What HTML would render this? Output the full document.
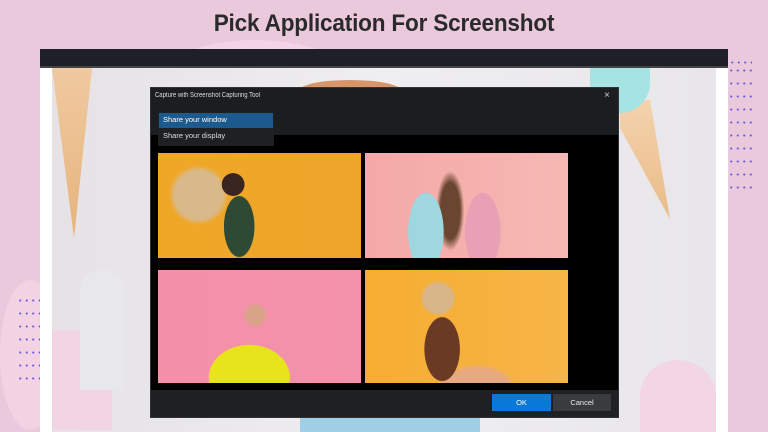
<!DOCTYPE html>
<html><head><style>
*{margin:0;padding:0;box-sizing:border-box}
html,body{width:768px;height:432px;overflow:hidden}
body{background:#ebc9dc;font-family:"Liberation Sans",sans-serif;position:relative}
.abs{position:absolute}
.title{left:0;width:768px;top:10px;text-align:center;font-size:24px;font-weight:bold;color:#2a2a2a;letter-spacing:-0.2px;transform:scaleX(0.94)}
.dots{background-image:radial-gradient(circle,#6b5be0 0.9px,transparent 1.2px);background-size:6.5px 13px}
</style></head><body>
<div class="abs" style="left:130px;top:40px;width:250px;height:140px;border-radius:50%;background:#f4d3e6"></div>
<div class="abs" style="left:0;top:280px;width:60px;height:150px;border-radius:50%;background:#f2d2e3"></div>
<div class="abs title">Pick Application For Screenshot</div>
<div class="abs dots" style="left:664px;top:56px;width:88px;height:8px"></div>
<div class="abs dots" style="left:728px;top:64px;width:24px;height:128px"></div>
<div class="abs dots" style="left:17px;top:294px;width:24px;height:96px"></div>
<div class="abs" style="left:40px;top:49px;width:688px;height:19px;background:#1d2127;border-bottom:2px solid #444"></div>
<div class="abs" style="left:40px;top:68px;width:688px;height:364px;background:#fff"></div>
<div class="abs" style="left:52px;top:68px;width:664px;height:364px;background:linear-gradient(90deg,#e6e2e6,#efeef0 50%,#e8e6ea)"></div>
<div class="abs" style="left:52px;top:68px;width:40px;height:170px;background:linear-gradient(180deg,#f0c9a0,#e6b47c);clip-path:polygon(0 0,100% 0,55% 100%)"></div>
<div class="abs" style="left:620px;top:100px;width:50px;height:140px;background:linear-gradient(180deg,#f3d2ad,#e9b881);clip-path:polygon(0 0,60% 0,100% 85%,0 20%)"></div>
<div class="abs" style="left:590px;top:68px;width:60px;height:45px;border-radius:0 0 30px 30px;background:#a6e4e3"></div>
<div class="abs" style="left:52px;top:330px;width:60px;height:100px;background:#f2d5e4"></div>
<div class="abs" style="left:80px;top:270px;width:45px;height:120px;border-radius:22px 22px 0 0;background:#e8e8ec"></div>
<div class="abs" style="left:300px;top:80px;width:100px;height:20px;border-radius:50% 50% 0 0;background:#d8956a"></div>
<div class="abs" style="left:640px;top:360px;width:76px;height:72px;border-radius:50% 50% 0 0;background:#f3d6e6"></div>
<div class="abs" style="left:300px;top:417px;width:180px;height:15px;background:#9fd0e8"></div>
<div class="abs" style="left:150px;top:87px;width:469px;height:331px;background:#000;border:1px solid #333"></div>
<div class="abs" style="left:151px;top:88px;width:467px;height:47px;background:#1c1d20"></div>
<div class="abs" style="left:155px;top:92px;font-size:7px;color:#ddd;transform:scaleX(0.85);transform-origin:left">Capture with Screenshot Capturing Tool</div>
<div class="abs" style="left:604px;top:90px;font-size:10px;color:#ccc">×</div>
<div class="abs" style="left:158px;top:112px;width:116px;height:34px;background:#1f2022"></div>
<div class="abs" style="left:159px;top:113px;width:114px;height:15px;background:#1c5a8e"></div>
<div class="abs" style="left:163px;top:115px;font-size:7.5px;color:#fff">Share your window</div>
<div class="abs" style="left:163px;top:131px;font-size:7.5px;color:#ddd">Share your display</div>
<div class="abs" style="left:158px;top:153px;width:203px;height:105px;background:radial-gradient(ellipse 25px 50px at 40% 70%,#2e4a34 60%,transparent 62%),radial-gradient(circle 16px at 37% 30%,#3a2420 70%,transparent 72%),radial-gradient(circle 30px at 20% 40%,#d9b98a 80%,transparent),linear-gradient(90deg,#f0a728,#eda62a)"></div>
<div class="abs" style="left:365px;top:153px;width:203px;height:105px;background:radial-gradient(ellipse 25px 55px at 30% 75%,#9fd7e0 70%,transparent 72%),radial-gradient(ellipse 25px 55px at 58% 75%,#e8a1b4 70%,transparent 72%),radial-gradient(ellipse 14px 40px at 42% 55%,#6a4630 70%,transparent),linear-gradient(90deg,#f4a9a8,#f6b8b4)"></div>
<div class="abs" style="left:158px;top:270px;width:203px;height:113px;background:radial-gradient(ellipse 50px 40px at 45% 95%,#e8e41c 80%,transparent 82%),radial-gradient(circle 12px at 48% 40%,#d9a38a 80%,transparent),linear-gradient(90deg,#f38fa8,#f592ab)"></div>
<div class="abs" style="left:365px;top:270px;width:203px;height:113px;background:radial-gradient(ellipse 25px 45px at 38% 70%,#6b3a22 70%,transparent 72%),radial-gradient(circle 18px at 36% 25%,#d9b58a 80%,transparent),radial-gradient(ellipse 40px 25px at 55% 105%,#e9a980 80%,transparent),linear-gradient(90deg,#f6ad30,#f7b548)"></div>
<div class="abs" style="left:151px;top:390px;width:467px;height:27px;background:#1f2022"></div>
<div class="abs" style="left:492px;top:394px;width:59px;height:17px;background:#0a78d7;color:#fff;font-size:7.5px;text-align:center;line-height:17px">OK</div>
<div class="abs" style="left:553px;top:394px;width:58px;height:17px;background:#3a3b3d;color:#eee;font-size:7.5px;text-align:center;line-height:17px">Cancel</div>
</body></html>
